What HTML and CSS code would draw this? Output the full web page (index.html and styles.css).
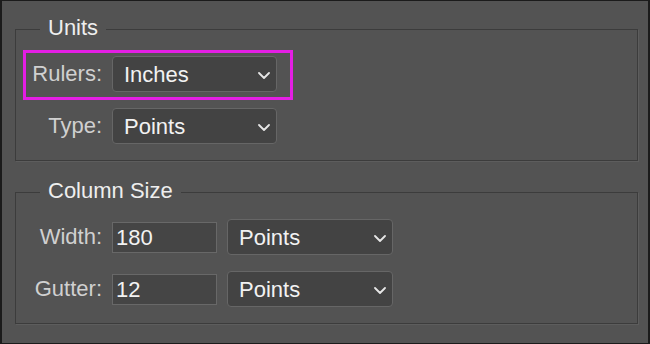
FILE: index.html
```html
<!DOCTYPE html>
<html lang="en">
<head>
  <meta charset="UTF-8">
  <meta name="viewport" content="width=device-width, initial-scale=1.0">
  <title>Units &amp; Rulers</title>
  <link rel="stylesheet" href="styles.css">
</head>
<body>

  <div class="panel">
    <!-- Units group -->
    <fieldset class="group">
      <legend>Units</legend>

      <div class="row highlight">
        <span class="label">Rulers:</span>
        <div class="dropdown">
          <span>Inches</span>
          <svg class="chevron" viewBox="0 0 12 7"><path d="M1 1l5 5 5-5"/></svg>
        </div>
      </div>

      <div class="row">
        <span class="label">Type:</span>
        <div class="dropdown">
          <span>Points</span>
          <svg class="chevron" viewBox="0 0 12 7"><path d="M1 1l5 5 5-5"/></svg>
        </div>
      </div>
    </fieldset>

    <!-- Column Size group -->
    <fieldset class="group columns">
      <legend>Column Size</legend>

      <div class="row">
        <span class="label">Width:</span>
        <div class="field">180</div>
        <div class="dropdown">
          <span>Points</span>
          <svg class="chevron" viewBox="0 0 12 7"><path d="M1 1l5 5 5-5"/></svg>
        </div>
      </div>

      <div class="row">
        <span class="label">Gutter:</span>
        <div class="field">12</div>
        <div class="dropdown">
          <span>Points</span>
          <svg class="chevron" viewBox="0 0 12 7"><path d="M1 1l5 5 5-5"/></svg>
        </div>
      </div>
    </fieldset>
  </div>

</body>
</html>
```

FILE: styles.css
```css
* {
  box-sizing: border-box;
  margin: 0;
  padding: 0;
}

body {
  font-family: 'Liberation Sans', Arial, sans-serif;
  font-size: 22px;
  background-color: #535353;
  color: #d2d2d2;
}

.panel {
  width: 650px;
  height: 344px;
  background-color: #535353;
  border: 1px solid #1b1b1b;
  border-left-width: 2px;
  border-right-width: 2px;
  padding: 14px 10px 0 13px;
}

.group {
  min-width: 0;
  border: 1px solid #3c3c3c;
  box-shadow: 1px 1px 0 rgba(255, 255, 255, 0.06);
  padding: 6px 10px 16px 10px;
}

.group legend {
  margin-left: 14px;
  padding: 0 8px 3px 8px;
  line-height: 26px;
  color: #eeeeee;
}

.group.columns {
  margin-top: 17px;
  padding-top: 12px;
}

.row {
  display: flex;
  align-items: center;
  gap: 10px;
  height: 36px;
}

.row + .row {
  margin-top: 16px;
}

.row.highlight {
  width: fit-content;
  height: 50px;
  margin-left: -3px;
  border: 3px solid #e41ee4;
  padding: 0 13px 2px 0;
}

.row.highlight + .row {
  margin-top: 8px;
}

.label {
  width: 76px;
  text-align: right;
  color: #d0d0d0;
}

.dropdown {
  width: 165px;
  height: 36px;
  display: flex;
  align-items: center;
  justify-content: space-between;
  padding: 2px 6px 0 11px;
  background-color: #434343;
  border: 1px solid #666666;
  border-radius: 4px;
  color: #f2f2f2;
}

.chevron {
  width: 12px;
  height: 7px;
  fill: none;
  stroke: #e6e6e6;
  stroke-width: 1.8;
  stroke-linecap: round;
  stroke-linejoin: round;
}

.field {
  width: 105px;
  height: 31px;
  display: flex;
  align-items: center;
  padding: 2px 0 0 3px;
  background-color: #454545;
  border: 1px solid #686868;
  color: #f2f2f2;
}

.columns .dropdown {
  width: 166px;
}
```
